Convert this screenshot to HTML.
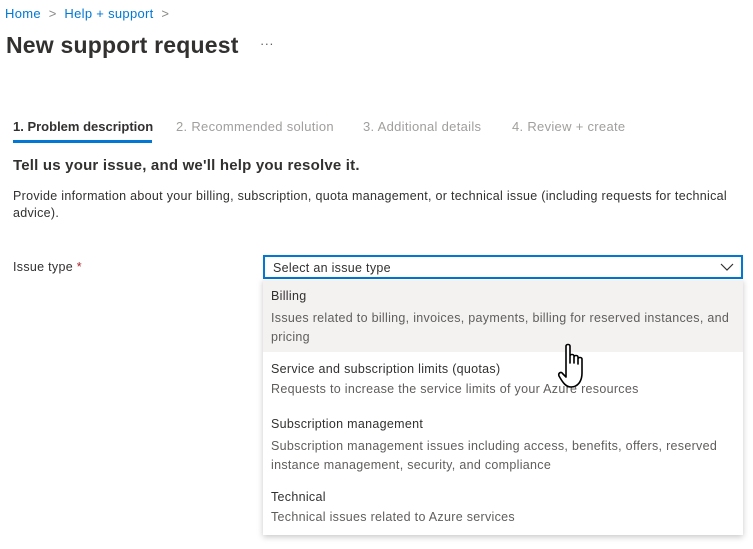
<!DOCTYPE html>
<html><head><style>
*{margin:0;padding:0;box-sizing:border-box}
body{width:753px;height:549px;background:#fff;font-family:"Liberation Sans",sans-serif;color:#323130;position:relative;overflow:hidden;font-size:12.5px;letter-spacing:0.3px}
.a{position:absolute;white-space:nowrap}
.blue{color:#0078d4}
.g{color:#a19f9d}
.d{color:#605e5c}
</style></head><body>
<div class="a blue" style="left:5px;top:6px;font-size:13px">Home <span style="color:#8a8886">&nbsp;&gt;&nbsp;</span> Help + support <span style="color:#8a8886">&nbsp;&gt;</span></div>
<div class="a" style="left:6px;top:32px;font-size:23px;font-weight:bold;color:#323130;letter-spacing:0.2px">New support request</div>
<div class="a" style="left:260px;top:36px;font-size:13px;color:#605e5c">···</div>
<div class="a" style="left:13px;top:119px;font-size:13px;font-weight:bold;color:#323130;letter-spacing:0">1. Problem description</div>
<div class="a" style="left:13px;top:140px;width:139px;height:3px;background:#0078d4"></div>
<div class="a g" style="left:176px;top:119px;font-size:13px">2. Recommended solution</div>
<div class="a g" style="left:363px;top:119px;font-size:13px">3. Additional details</div>
<div class="a g" style="left:512px;top:119px;font-size:13px">4. Review + create</div>
<div class="a" style="left:13px;top:157px;font-size:15px;font-weight:bold;letter-spacing:0.2px">Tell us your issue, and we'll help you resolve it.</div>
<div class="a" style="left:13px;top:188px;font-size:12.5px;line-height:17px;white-space:normal;width:735px">Provide information about your billing, subscription, quota management, or technical issue (including requests for technical advice).</div>
<div class="a" style="left:13px;top:260px">Issue type <span style="color:#a4262c">*</span></div>
<div class="a" style="left:263px;top:255px;width:480px;height:24px;border:2px solid #0078d4;padding:4px 0 0 8px">Select an issue type</div>
<svg class="a" style="left:720px;top:262px" width="14" height="10"><path d="M1 2 L7 8 L13 2" fill="none" stroke="#323130" stroke-width="1.2"/></svg>
<div class="a" style="left:263px;top:279px;width:480px;height:256px;background:#fff;box-shadow:0 2px 6px rgba(0,0,0,.22)"></div>
<div class="a" style="left:263px;top:280px;width:480px;height:72px;background:#f3f2f1"></div>
<div class="a" style="left:271px;top:289px">Billing</div>
<div class="a d" style="left:271px;top:309px;line-height:19px">Issues related to billing, invoices, payments, billing for reserved instances, and<br>pricing</div>
<div class="a" style="left:271px;top:362px">Service and subscription limits (quotas)</div>
<div class="a d" style="left:271px;top:382px">Requests to increase the service limits of your Azure resources</div>
<div class="a" style="left:271px;top:417px">Subscription management</div>
<div class="a d" style="left:271px;top:437px;line-height:19px">Subscription management issues including access, benefits, offers, reserved<br>instance management, security, and compliance</div>
<div class="a" style="left:271px;top:490px">Technical</div>
<div class="a d" style="left:271px;top:510px">Technical issues related to Azure services</div>
<svg class="a" style="left:556px;top:343px" width="40" height="48" viewBox="0 0 40 48"><path d="M10 3 C10 1 14 1 14 3 L14 20 L14 13 C14 11 18 11 18 13 L18 20 L18 14 C18 12 22 12 22 14 L22 21 L22 16 C22 14 26 14 26 16 L26 30 C26 38 22 44 15 44 C10 44 7 40 3 33 C2 30 5 28 7 31 L10 34 Z" fill="#fff" stroke="#000" stroke-width="1.6" stroke-linejoin="round"/></svg>
</body></html>
